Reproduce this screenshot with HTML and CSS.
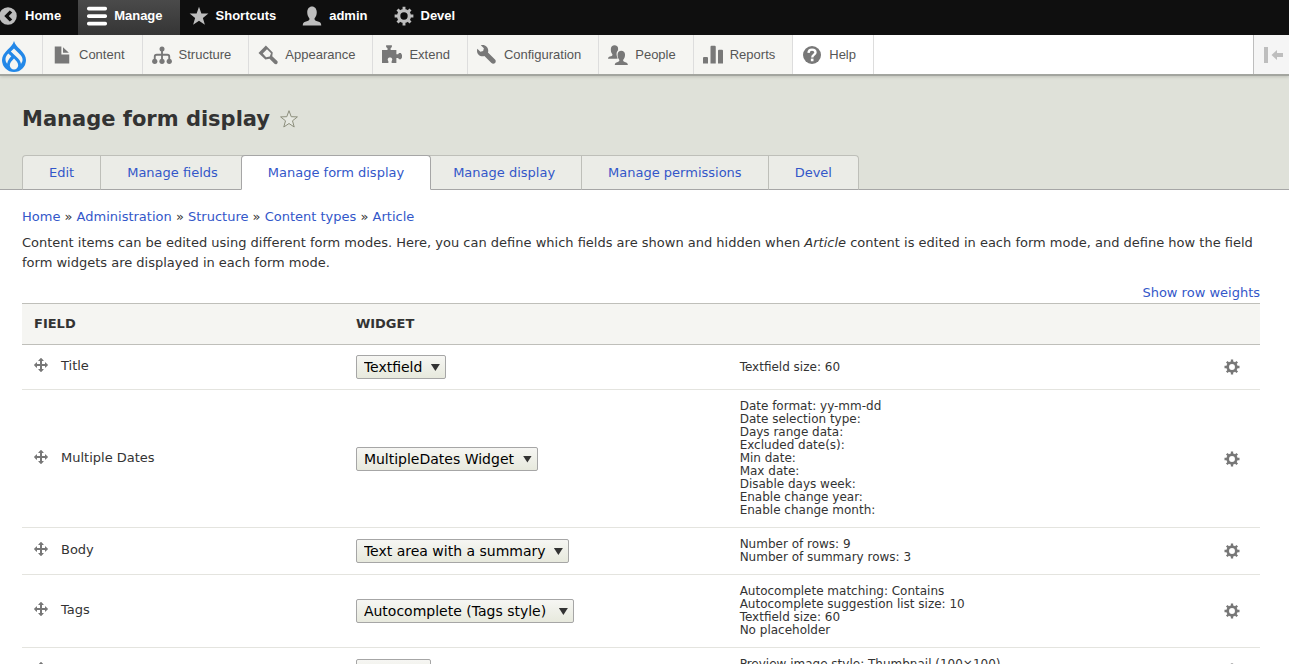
FILE: index.html
```html
<!DOCTYPE html>
<html lang="en">
<head>
<meta charset="utf-8">
<title>Manage form display</title>
<link rel="stylesheet" href="styles.css">
</head>
<body>
<svg class="sprite" aria-hidden="true">
  <symbol id="cog" viewBox="0 0 16 16"><g fill="none" stroke="currentColor"><circle cx="8" cy="8" r="4.300" stroke-width="2.700"/><path stroke-width="2.300" d="M8 .5v3M8 12.500v3M.5 8h3M12.500 8h3M2.800 2.800l2 2M11.200 11.200l2 2M2.800 13.200l2-2M11.200 4.800l2-2"/></g></symbol>
  <symbol id="move" viewBox="0 0 16 16"><path d="M14.904 7.753l-2.373-2.372c-.291-.292-.529-.193-.529.22v1.399h-3v-3h1.398c.414 0 .512-.239.221-.53l-2.371-2.372c-.137-.136-.36-.136-.497 0l-2.372 2.372c-.292.292-.193.53.22.53h1.399v3h-3v-1.369c0-.413-.239-.511-.53-.22l-2.372 2.372c-.136.136-.136.359 0 .494l2.372 2.372c.291.292.53.192.53-.219v-1.43h3v3h-1.4c-.413 0-.511.238-.22.529l2.374 2.373c.137.137.36.137.495 0l2.373-2.373c.29-.291.19-.529-.222-.529H9v-3h3v1.400c0 .411.239.511.53.219l2.373-2.371c.137-.137.137-.359.001-.495z"/></symbol>
</svg>

<nav class="bar" aria-label="Toolbar">
  <a class="bar-item" href="#"><svg class="icon" viewBox="0 0 16 16"><path fill-rule="evenodd" d="M8 1a7 7 0 1 0 0 14A7 7 0 0 0 8 1zm1.400 2.600L11.400 5.200 8.600 8l2.800 2.800-2 1.600L5 8z"/></svg>Home</a>
  <a class="bar-item is-active" href="#"><svg class="icon" viewBox="0 0 16 16"><rect y="0.500" width="16" height="3" rx="1.300"/><rect y="6.500" width="16" height="3" rx="1.300"/><rect y="12.500" width="16" height="3" rx="1.300"/></svg>Manage</a>
  <a class="bar-item" href="#"><svg class="icon" viewBox="0 0 16 16"><path d="M8 .5l1.900 5.400 5.600.1-4.400 3.500 1.600 5.500L8 11.800 3.300 15l1.600-5.500L.5 6l5.600-.1z"/></svg>Shortcuts</a>
  <a class="bar-item" href="#"><svg class="icon" viewBox="0 0 16 16"><path d="M.6 15.600c0-1.600.6-2.500 2-3 1.800-.7 3.400-.8 3.400-2.200 0-.9-1.800-2-1.800-5.400C4.200 2.200 5.700.4 8 .4s3.800 1.800 3.800 4.600c0 3.400-1.800 4.500-1.800 5.400 0 1.400 1.600 1.500 3.400 2.200 1.400.5 2 1.400 2 3z"/></svg>admin</a>
  <a class="bar-item" href="#"><svg class="icon"><use href="#cog"/></svg>Devel</a>
</nav>

<nav class="tray" aria-label="Administration menu">
  <a class="tray-logo" href="#" aria-label="Drupal"><svg class="logo" viewBox="0 0 24 31"><path fill="#2388e8" d="M12 0c1 4 3.400 5.600 6 8.200C21.600 11.800 24 15 24 19a12 12 0 0 1-24 0c0-4 2.400-7.200 6-10.800C8.600 5.600 11 4 12 0z"/><g fill="#f5f5f2"><path d="M6.300 12.600l3 2.700C7 17.800 5.600 20 5.200 22.800 2.600 19.500 3 15.800 6.300 12.600z"/><path d="M12 7.500l5.500 5.600c3.600 3.600 4 6.600 1.500 9.800-.5-3-2.300-4.800-4.400-6.900L8.800 10.500z"/><path d="M12 17.500c2.200 2.300 4.200 4 4.200 6.800a4.200 4.200 0 0 1-8.400 0c0-2.800 2-4.500 4.200-6.800z"/></g></svg></a>
  <a class="tray-item" href="#"><svg class="icon" viewBox="0 0 16 16"><path d="M2.200 1.200h5.300v6.300h6.300v7.300H2.200zM8.800 1.700l4.700 4.500H8.800z"/></svg>Content</a>
  <a class="tray-item" href="#"><svg class="icon" viewBox="0 0 16 16"><g fill="none" stroke="currentColor" stroke-width="1.500"><path d="M8 3v10M2.200 13V9.300q0-1.500 1.500-1.500h8.600q1.500 0 1.500 1.500V13"/></g><circle cx="8" cy="3.200" r="2"/><circle cx="2.200" cy="13" r="2.100"/><circle cx="8" cy="13" r="2.100"/><circle cx="13.800" cy="13" r="2.100"/></svg>Structure</a>
  <a class="tray-item" href="#"><svg class="icon" viewBox="0 0 16 16"><path fill-rule="evenodd" d="M6.300.4l5.500 5.500-.4 3 4 3.900c1.200 1.400-.9 3.400-2.200 2.200l-4-4.100-3.300.6L.4 6.300zM7.200 3.300L3.800 6.800l2.700 3 2.900-.7 1-2.600z"/></svg>Appearance</a>
  <a class="tray-item" href="#"><svg class="icon" viewBox="0 0 16 16"><path d="M0 4h4.400V2.500L3.300 1.600V.2h4.600v1.400L6.900 2.500V4h4.600v3.400h1.400l.7-1h1.500l.9 1.500v2l-.9 1.500h-1.500l-.7-1h-1.400v4H7.700v-1.500c1.100-1.300.4-2.900-1.300-2.900s-2.400 1.600-1.300 2.900v1.500H0z"/></svg>Extend</a>
  <a class="tray-item" href="#"><svg class="icon" viewBox="0 0 16 16"><path d="M14.416 11.586l-.01-.009-5.656-5.656c.15-.449.252-.921.252-1.421 0-2.485-2.016-4.500-4.502-4.500-.505 0-.981.102-1.434.255l2.431 2.431-.588 2.196-2.196.588-2.445-2.445C.106 3.489 0 3.981 0 4.500 0 6.986 2.015 9 4.500 9c.5 0 .972-.102 1.421-.251l5.667 5.665c.781.781 2.047.781 2.828 0s.781-2.047 0-2.828z"/></svg>Configuration</a>
  <a class="tray-item" href="#"><svg class="icon" viewBox="0 0 16 16"><path d="M0 11c0-1.300 1-1.700 2.300-2 1-.3 1.400-.8 1.200-1.600C2.400 6.200 2.200 4.700 2.300 3 2.400 1.300 3.500.2 5.200.2s3 1 2.900 2.900L8 4.200C6.800 5.400 6.700 7 7 8.500c.2 1 .6 1.500.8 2.300L6.500 11z"/><path d="M5.400 16c0-1.500.8-2.100 2.400-2.500 1.200-.3 1.500-.9 1.200-1.700C7.900 10.500 7.600 9 7.700 7.400c.1-1.800 1.200-2.900 2.900-2.900s2.900 1.100 3 2.900c.1 1.600-.3 3.100-1.400 4.400-.3.800 0 1.400 1.200 1.700 1.600.4 2.500 1 2.500 2.500z"/></svg>People</a>
  <a class="tray-item" href="#"><svg class="icon" viewBox="0 0 16 16"><path d="M0 10.300c0-.5.300-.8.800-.8h2.400c.5 0 .8.300.8.800v4.500H0zM6 1.400c0-.6.300-.9.800-.9h2.600c.5 0 .8.300.8.900v13.400H6zM12 4.600c0-.5.300-.8.800-.8h2.400c.5 0 .8.300.8.800v10.200h-4z"/></svg>Reports</a>
  <a class="tray-item is-plain" href="#"><svg class="icon" viewBox="0 0 16 16"><circle cx="8" cy="8" r="7.200"/><path fill="none" stroke="#fff" stroke-width="1.900" d="M5.200 6.300C5.300 4.500 6.500 3.700 8 3.700c1.600 0 2.800.9 2.800 2.200C10.800 7.700 8.200 7.700 8.200 10"/><rect x="7.100" y="10.900" width="2.100" height="2.100" fill="#fff"/></svg>Help</a>
  <button class="tray-toggle" type="button" aria-label="Vertical orientation"><svg viewBox="0 0 20 16"><path d="M1 0h4v16H1zM8.500 8l5.500-5v3h6v4h-6v3z"/></svg></button>
</nav>

<header class="header">
  <div class="title-row">
    <h1>Manage form display</h1>
    <a class="star" href="#" aria-label="Add to shortcuts"><svg viewBox="0 0 18 18"><path d="M9 .7l2.200 6 6.200.2-4.900 3.900 1.700 6.200L9 13.500 3.800 17l1.700-6.200L.6 6.900l6.200-.2z"/></svg></a>
  </div>
  <nav class="tabs" aria-label="Tabs">
    <a class="tab" href="#">Edit</a>
    <a class="tab" href="#">Manage fields</a>
    <a class="tab is-active" href="#">Manage form display</a>
    <a class="tab" href="#">Manage display</a>
    <a class="tab" href="#">Manage permissions</a>
    <a class="tab" href="#">Devel</a>
  </nav>
</header>

<main class="content">
  <nav class="breadcrumb" aria-label="Breadcrumb"><a href="#">Home</a> » <a href="#">Administration</a> » <a href="#">Structure</a> » <a href="#">Content types</a> » <a href="#">Article</a></nav>
  <p class="help">Content items can be edited using different form modes. Here, you can define which fields are shown and hidden when <em>Article</em> content is edited in each form mode, and define how the field form widgets are displayed in each form mode.</p>
  <div class="weights"><a href="#">Show row weights</a></div>
  <table class="fields">
    <thead>
      <tr><th class="col-field">Field</th><th class="col-widget">Widget</th><th></th><th class="col-edit"></th></tr>
    </thead>
    <tbody>
      <tr>
        <td><div class="field"><svg class="handle"><use href="#move"/></svg><label for="w-title">Title</label></div></td>
        <td><span class="picker"><select id="w-title"><option>Textfield</option></select></span></td>
        <td class="summary">Textfield size: 60</td>
        <td><button class="edit" type="button" aria-label="Edit Title"><svg><use href="#cog"/></svg></button></td>
      </tr>
      <tr>
        <td><div class="field"><svg class="handle"><use href="#move"/></svg><label for="w-dates">Multiple Dates</label></div></td>
        <td><span class="picker"><select id="w-dates"><option>MultipleDates Widget</option></select></span></td>
        <td class="summary">Date format: yy-mm-dd<br>Date selection type:<br>Days range data:<br>Excluded date(s):<br>Min date:<br>Max date:<br>Disable days week:<br>Enable change year:<br>Enable change month:</td>
        <td><button class="edit" type="button" aria-label="Edit Multiple Dates"><svg><use href="#cog"/></svg></button></td>
      </tr>
      <tr>
        <td><div class="field"><svg class="handle"><use href="#move"/></svg><label for="w-body">Body</label></div></td>
        <td><span class="picker"><select id="w-body"><option>Text area with a summary</option></select></span></td>
        <td class="summary">Number of rows: 9<br>Number of summary rows: 3</td>
        <td><button class="edit" type="button" aria-label="Edit Body"><svg><use href="#cog"/></svg></button></td>
      </tr>
      <tr>
        <td><div class="field"><svg class="handle"><use href="#move"/></svg><label for="w-tags">Tags</label></div></td>
        <td><span class="picker"><select id="w-tags"><option>Autocomplete (Tags style)</option><option>Check boxes/radio buttons</option></select></span></td>
        <td class="summary">Autocomplete matching: Contains<br>Autocomplete suggestion list size: 10<br>Textfield size: 60<br>No placeholder</td>
        <td><button class="edit" type="button" aria-label="Edit Tags"><svg><use href="#cog"/></svg></button></td>
      </tr>
      <tr>
        <td><div class="field"><svg class="handle"><use href="#move"/></svg><label for="w-image">Image</label></div></td>
        <td><span class="picker"><select id="w-image"><option>Image</option></select></span></td>
        <td class="summary">Preview image style: Thumbnail (100×100)<br>Progress indicator: Throbber</td>
        <td><button class="edit" type="button" aria-label="Edit Image"><svg><use href="#cog"/></svg></button></td>
      </tr>
    </tbody>
  </table>
</main>
</body>
</html>
```
FILE: styles.css
```css
* { box-sizing: border-box; }

html { scrollbar-width: none; }

body {
  margin: 0;
  background: #fff;
  color: #333;
  font: 13px/20px "DejaVu Sans", sans-serif;
}

a { color: #3357c9; text-decoration: none; }

.sprite { display: none; }

.icon {
  flex: none;
  width: 20px;
  height: 20px;
  fill: currentColor;
}

/* Toolbar */
.bar {
  display: flex;
  height: 35px;
  padding-right: 12px;
  margin-left: -11px;
  background: #0f0f0f;
  font: bold 13px/32px "Liberation Sans", sans-serif;
}

.bar-item {
  display: flex;
  align-items: center;
  gap: 7px;
  padding: 0 17px 3px 9px;
  color: #fff;
}

.bar-item .icon { color: #bebebe; }

.bar-item.is-active { background: linear-gradient(#4a4a4a, #353535); }

.bar-item.is-active .icon { color: #fff; }

/* Tray */
.tray {
  position: relative;
  display: flex;
  height: 39px;
  background: #fff;
  box-shadow: 0 1px 0 1px #a3a59f, 0 3px 3px #bfc1b9;
  font: 13px/39px "Liberation Sans", sans-serif;
}

.tray-logo,
.tray-item {
  display: flex;
  align-items: center;
  border-right: 1px solid #ddd;
  background: #f5f5f2;
}

.tray-logo {
  width: 43px;
  padding: 3px 0 0 2px;
}

.logo { width: 24px; height: 31px; }

.tray-item {
  gap: 7px;
  padding: 0 17px 0 9px;
  color: #565656;
}

.tray-item .icon { color: #787878; }

.tray-item.is-plain { background: #fff; }

.tray-toggle {
  width: 36px;
  margin-left: auto;
  padding: 0 0 0 9px;
  border: 0;
  border-left: 1px solid #bebebe;
  background: #f5f5f5;
}

.tray-toggle svg { display: block; width: 20px; height: 16px; fill: #bebebe; }

/* Page header */
.header {
  padding: 31px 22px 0;
  border-bottom: 1px solid #a6a6a6;
  background: #dfe1d9;
}

.title-row { display: flex; align-items: center; gap: 10px; }

h1 { margin: 0; font-size: 21px; line-height: 28px; }

.star svg {
  display: block;
  width: 18px;
  height: 18px;
  fill: #e6e8e1;
  stroke: #8c8e7c;
}

.tabs {
  display: flex;
  margin: 22px 0 -1px;
}

.tab {
  height: 35px;
  padding: 0 26px;
  border: 1px solid #bebfb9;
  border-width: 1px 1px 1px 0;
  border-bottom-color: #a6a6a6;
  background: #ebece7;
  line-height: 33px;
}

.tab:first-child { border-left-width: 1px; border-top-left-radius: 4px; }

.tab:last-child { border-top-right-radius: 4px; }

.tab.is-active {
  z-index: 1;
  margin: 0 -4px;
  border: 1px solid #a6a6a6;
  border-bottom-color: #fff;
  border-radius: 4px 4px 0 0;
  background: #fff;
}

/* Content */
.content { padding: 17px 29px 0 22px; }

.help { margin: 6px 0 10px; }

.weights { text-align: right; }

.fields {
  width: 100%;
  border-collapse: separate;
  border-spacing: 0;
  table-layout: fixed;
}

.col-field { width: 26%; }
.col-widget { width: 31%; }
.col-edit { width: 48px; }

th {
  padding: 10px 12px;
  height: 42px;
  border: 1px solid #bfbfba;
  border-width: 1px 0;
  background: #f5f5f2;
  text-align: left;
  text-transform: uppercase;
}

td {
  padding: 10px 12px;
  border-bottom: 1px solid #e4e4df;
  vertical-align: middle;
}

.field {
  display: flex;
  gap: 12px;
  align-items: flex-start;
  padding-bottom: 2px;
}

.handle { width: 16px; height: 16px; margin: 1px 0 0 -1px; fill: #777; }

.picker { position: relative; display: block; width: max-content; }

.picker::after {
  content: "";
  position: absolute;
  top: 9px;
  right: 6px;
  width: 9px;
  height: 7px;
  background: #333;
  clip-path: polygon(0 0, 100% 0, 50% 100%);
  pointer-events: none;
}

select {
  display: block;
  height: 24px;
  padding: 0 22px 0 7px;
  border: 1px solid #a6a6a6;
  border-radius: 2px;
  background: linear-gradient(#f6f6f3, #e7e9dd);
  color: #000;
  font: 14px "DejaVu Sans", sans-serif;
  appearance: none;
}

.summary { font-size: 12px; line-height: 13px; }

.edit {
  display: block;
  padding: 0;
  border: 0;
  background: none;
  color: #777;
}

.edit svg { display: block; width: 16px; height: 16px; }
```
